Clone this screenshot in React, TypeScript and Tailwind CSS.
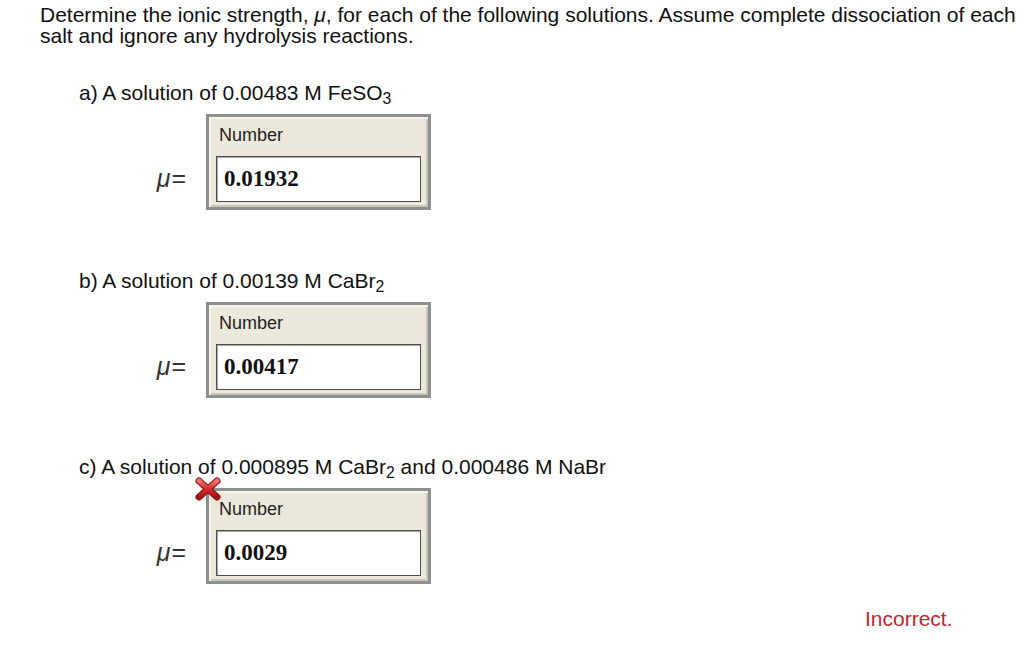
import React from "react"

const sans = { fontFamily: '"Liberation Sans", Arial, sans-serif' }

function RedX() {
  return (
    <svg width="28" height="26" viewBox="0 0 28 26" className="absolute left-[-15px] top-[-15px]">
      <defs>
        <linearGradient id="xg" x1="0" y1="0" x2="0" y2="1">
          <stop offset="0" stopColor="#f07070" />
          <stop offset="0.5" stopColor="#d42a2a" />
          <stop offset="1" stopColor="#a01414" />
        </linearGradient>
      </defs>
      <g stroke="#8a1010" strokeWidth="7" strokeLinecap="round">
        <line x1="5" y1="5" x2="23" y2="21" />
        <line x1="23" y1="5" x2="5" y2="21" />
      </g>
      <g stroke="url(#xg)" strokeWidth="5" strokeLinecap="round">
        <line x1="5" y1="5" x2="23" y2="21" />
        <line x1="23" y1="5" x2="5" y2="21" />
      </g>
    </svg>
  )
}

function AnswerBox({ value, wrong }: { value: string; wrong?: boolean }) {
  return (
    <div className="flex items-end">
      <div className="w-[126px] h-[96px] flex items-center justify-end pr-[19px] pt-[34px]">
        <span className="text-[25px] text-[#333] tracking-[1px]" style={sans}>
          <span className="italic">μ</span>=
        </span>
      </div>
      <div className="relative w-[225px] h-[96px] border-[3px] border-[#8d918e] bg-[#ece9dc] shadow-[inset_2px_2px_0_#f7f5ee,inset_-2px_-2px_0_#c9c6b8]">
        {wrong && <RedX />}
        <div className="pl-[10px] pt-[8px] text-[18px] leading-[20px] text-[#222]" style={sans}>
          Number
        </div>
        <div className="ml-[7px] mt-[11px] w-[205px] h-[46px] bg-white border border-[#4d4d4d] shadow-[inset_1px_1px_0_#aaa] flex items-center pl-[7px]">
          <span
            className="text-[23px] font-bold text-[#111]"
            style={{ fontFamily: '"Liberation Serif", "Times New Roman", serif' }}
          >
            {value}
          </span>
        </div>
      </div>
    </div>
  )
}

export default function App() {
  return (
    <div className="w-[1024px] h-[670px] bg-white text-[#111] overflow-hidden" style={sans}>
      <div className="pl-[40px] pt-[4px] text-[21px] leading-[21px]">
        <div className="whitespace-nowrap">
          Determine the ionic strength, <span className="italic">μ</span>, for each of the following solutions. Assume complete dissociation of each
        </div>
        <div className="whitespace-nowrap">salt and ignore any hydrolysis reactions.</div>
      </div>

      <div className="pl-[79px] mt-[36px] text-[21px] leading-[21px]">
        a) A solution of 0.00483 M FeSO<sub>3</sub>
      </div>
      <div className="pl-[80px] mt-[11px]">
        <AnswerBox value="0.01932" />
      </div>

      <div className="pl-[79px] mt-[60px] text-[21px] leading-[21px]">
        b) A solution of 0.00139 M CaBr<sub>2</sub>
      </div>
      <div className="pl-[80px] mt-[11px]">
        <AnswerBox value="0.00417" />
      </div>

      <div className="pl-[79px] mt-[58px] text-[21px] leading-[21px]">
        c) A solution of 0.000895 M CaBr<sub>2</sub> and 0.000486 M NaBr
      </div>
      <div className="pl-[80px] mt-[11px]">
        <AnswerBox value="0.0029" wrong />
      </div>

      <div className="pl-[865px] mt-[24px] text-[21px] leading-[21px] text-[#c1272d]">Incorrect.</div>
    </div>
  )
}
